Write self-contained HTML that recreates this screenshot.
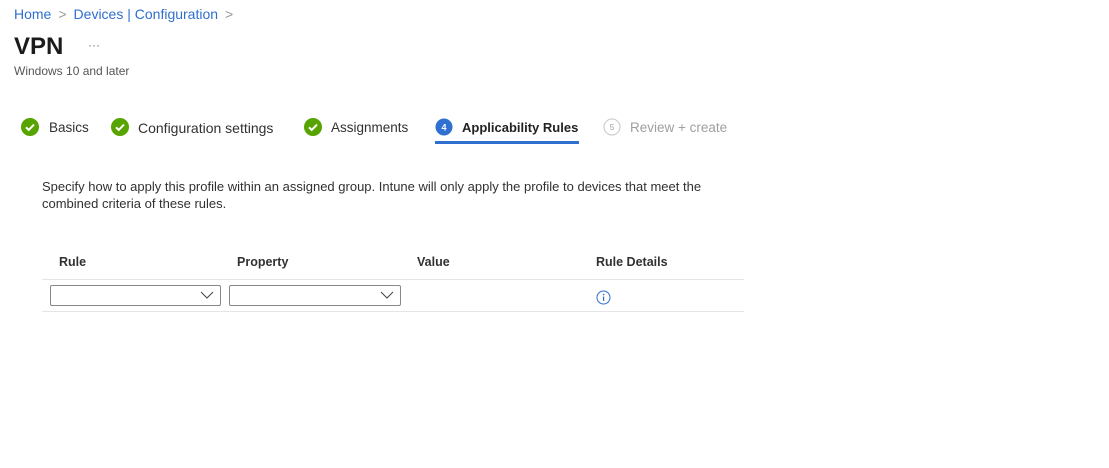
<!DOCTYPE html>
<html><head><style>
body{margin:0;width:1109px;height:468px;background:#fff;font-family:"Liberation Sans",sans-serif;color:#323130;position:relative;overflow:hidden}
.a{position:absolute;white-space:nowrap}
.bc{top:6px;left:14px;font-size:14px;color:#2f6fcf}
.bc .s{color:#999;margin:0 7px}
.tab{top:120px;font-size:13.5px}
.sel{position:absolute;top:285px;height:21px;border:1px solid #8a8886;border-radius:2px;box-sizing:border-box}
.sel svg{position:absolute;right:6px;top:5px}
</style></head><body>
<div class="a bc">Home<span class="s">&gt;</span>Devices | Configuration<span class="s">&gt;</span></div>
<div class="a" style="top:33px;left:14px;font-size:24px;font-weight:bold;color:#1b1b1b">VPN</div>
<div class="a" style="top:38px;left:88px;font-size:12px;color:#777">···</div>
<div class="a" style="top:64px;left:14px;font-size:12px;color:#555">Windows 10 and later</div>

<svg class="a" style="left:21px;top:118px" width="18" height="18"><circle cx="9" cy="9" r="9" fill="#57a300"/><path d="M5 9.3l2.7 2.7L13 6.6" stroke="#fff" stroke-width="2" fill="none"/></svg>
<div class="a tab" style="left:49px">Basics</div>
<svg class="a" style="left:111px;top:118px" width="18" height="18"><circle cx="9" cy="9" r="9" fill="#57a300"/><path d="M5 9.3l2.7 2.7L13 6.6" stroke="#fff" stroke-width="2" fill="none"/></svg>
<div class="a tab" style="left:138px;font-size:14px">Configuration settings</div>
<svg class="a" style="left:304px;top:118px" width="18" height="18"><circle cx="9" cy="9" r="9" fill="#57a300"/><path d="M5 9.3l2.7 2.7L13 6.6" stroke="#fff" stroke-width="2" fill="none"/></svg>
<div class="a tab" style="left:331px">Assignments</div>
<svg class="a" style="left:435px;top:118px" width="18" height="18"><circle cx="9" cy="9" r="8.5" fill="#2f6fcf"/><text x="9" y="12.5" font-size="9" font-weight="bold" fill="#fff" text-anchor="middle" font-family="Liberation Sans">4</text></svg>
<div class="a tab" style="left:462px;font-weight:bold;color:#222;font-size:13px">Applicability Rules</div>
<div class="a" style="left:435px;top:141px;width:144px;height:3px;background:#2f6fcf"></div>
<svg class="a" style="left:603px;top:118px" width="18" height="18"><circle cx="9" cy="9" r="8" fill="none" stroke="#c8c6c4"/><text x="9" y="12" font-size="8" fill="#a19f9d" text-anchor="middle" font-family="Liberation Sans">5</text></svg>
<div class="a tab" style="left:630px;color:#a19f9d">Review + create</div>

<div class="a" style="top:178px;left:42px;font-size:13px;line-height:17px;color:#323130">Specify how to apply this profile within an assigned group. Intune will only apply the profile to devices that meet the<br>combined criteria of these rules.</div>

<div class="a" style="top:255px;left:59px;font-size:12.5px;font-weight:bold;color:#323130">Rule</div>
<div class="a" style="top:255px;left:237px;font-size:12.5px;font-weight:bold">Property</div>
<div class="a" style="top:255px;left:417px;font-size:12.5px;font-weight:bold">Value</div>
<div class="a" style="top:255px;left:596px;font-size:12.5px;font-weight:bold">Rule Details</div>
<div class="a" style="top:279px;left:42px;width:702px;height:1px;background:#e5e5e5"></div>
<div class="sel" style="left:50px;width:171px"><svg width="14" height="9"><path d="M1 1l6 6 6-6" stroke="#444" fill="none"/></svg></div>
<div class="sel" style="left:229px;width:172px"><svg width="14" height="9"><path d="M1 1l6 6 6-6" stroke="#444" fill="none"/></svg></div>
<svg class="a" style="left:596px;top:290px" width="15" height="15"><circle cx="7.5" cy="7.5" r="6.5" fill="none" stroke="#2f6fcf"/><rect x="7" y="6.5" width="1.2" height="4.5" fill="#2f6fcf"/><circle cx="7.6" cy="4.6" r=".8" fill="#2f6fcf"/></svg>
<div class="a" style="top:311px;left:42px;width:702px;height:1px;background:#e5e5e5"></div>
</body></html>
